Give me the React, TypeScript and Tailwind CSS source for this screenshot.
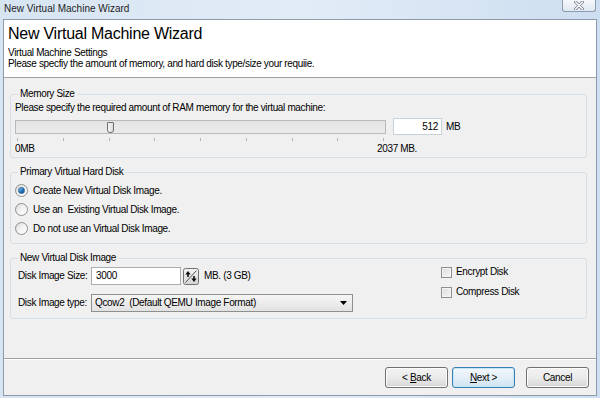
const ticks = [0, 1, 2, 3, 4, 5, 6, 7, 8]

function Radio({checked, label}: {checked?: boolean; label: string}) {
  return (
    <label className="flex h-[19px] items-center">
      <span className="flex h-[13px] w-[13px] items-center justify-center rounded-full border border-[#8e8f8f] bg-gradient-to-br from-[#d8d8d8] via-[#f4f4f4] to-[#ffffff]">
        {checked && (
          <span className="h-[7px] w-[7px] rounded-full bg-gradient-to-br from-[#9fd3f6] via-[#2a7ec4] to-[#0f4f91] border border-[#1f5b96]" />
        )}
      </span>
      <span className="ml-[5px] whitespace-pre">{label}</span>
    </label>
  )
}

function Checkbox({label}: {label: string}) {
  return (
    <label className="flex h-[12px] items-center">
      <span className="h-[11px] w-[11px] border border-[#8e8f8f] bg-gradient-to-br from-[#dcdcdc] to-[#f6f6f6] shadow-[inset_0_0_0_1px_#f4f4f4]" />
      <span className="ml-[4px] whitespace-nowrap">{label}</span>
    </label>
  )
}

function WinButton({children, focused}: {children: React.ReactNode; focused?: boolean}) {
  return (
    <button
      className={
        focused
          ? "h-[21px] w-[63px] rounded-[3px] border border-[#3c7fb1] bg-gradient-to-b from-[#f2f7fb] via-[#e5eff8] to-[#cfe3f3] shadow-[inset_0_0_0_1px_#c2e4f6] text-black"
          : "h-[21px] w-[63px] rounded-[3px] border border-[#707070] bg-gradient-to-b from-[#f2f2f2] via-[#ebebeb] to-[#d6d6d6] shadow-[inset_0_0_0_1px_#fcfcfc] text-black"
      }
    >
      {children}
    </button>
  )
}

export default function App() {
  return (
    <div className="flex h-[398px] w-[600px] flex-col bg-gradient-to-r from-[#d7e4f2] via-[#e2ecf7] to-[#cddef0] font-['Liberation_Sans',Arial,sans-serif] text-[10px] leading-[12px] tracking-[-0.35px] text-black">
      {/* title bar */}
      <div className="flex h-[19px] shrink-0 items-start justify-between">
        <span className="ml-[4px] mt-[3px] text-[10px] tracking-normal text-[#1e1e1e]">New Virtual Machine Wizard</span>
        <div className="mr-[4px] flex h-[12px] w-[34px] items-center justify-center rounded-b-[3px] border border-t-0 border-[#8c9cb0] bg-gradient-to-b from-[#f5f8fb] to-[#dfe8f1]">
          <svg width="10" height="9" viewBox="0 0 10 9">
            <path d="M1.5 1 L8.5 8 M8.5 1 L1.5 8" stroke="#7d8794" strokeWidth="3" strokeLinecap="round" />
            <path d="M1.5 1 L8.5 8 M8.5 1 L1.5 8" stroke="#ffffff" strokeWidth="1.3" strokeLinecap="round" />
          </svg>
        </div>
      </div>

      {/* window client */}
      <div className="mx-[3px] mb-[2px] flex flex-1 flex-col border border-[#8e9aab] bg-[#f0f0f0]">
        {/* header */}
        <div className="h-[58px] shrink-0 border-b border-[#a0a0a0] bg-white pl-[4px] pt-[4px]">
          <div className="text-[16px] leading-[20px] tracking-[-0.25px] text-black">New Virtual Machine Wizard</div>
          <div className="mt-[3px] leading-[11px]">Virtual Machine Settings</div>
          <div className="leading-[11px]">Please specfiy the amount of memory, and hard disk type/size your requiie.</div>
        </div>

        {/* content */}
        <div className="flex flex-1 flex-col gap-[8px] pl-[6px] pr-[9px] pt-[10px]">
          {/* Memory */}
          <fieldset className="h-[70px] rounded-[3px] border border-[#d5dfe5] pl-[4px]">
            <legend className="ml-[3px] px-[2px] leading-[12px]">Memory Size</legend>
            <div className="mt-[2px]">Please specify the required amount of RAM memory for the virtual machine:</div>
            <div className="mt-[4px] flex h-[17px] items-center">
              <div className="relative h-[14px] w-[371px] border border-[#b9b9b9] bg-gradient-to-b from-[#e3e3e3] to-[#ebebeb]">
                <div className="absolute left-[91px] top-[1px] h-[11px] w-[7px] rounded-b-[3px] rounded-t-[1px] border border-[#6f6f6f] bg-gradient-to-r from-[#f6f6f6] to-[#dcdcdc]" />
              </div>
              <div className="ml-[7px] flex h-[17px] w-[49px] items-center justify-end border border-[#c9d1d8] bg-white pr-[3px]">512</div>
              <span className="ml-[4px]">MB</span>
            </div>
            <div className="mt-[3px] flex w-[371px] justify-between px-[2px]">
              {ticks.map(t => (
                <span key={t} className="h-[3px] w-px bg-[#b4b4b4]" />
              ))}
            </div>
            <div className="mt-[2px] flex">
              <span className="w-[362px]">0MB</span>
              <span>2037 MB.</span>
            </div>
          </fieldset>

          {/* Primary disk */}
          <fieldset className="h-[78px] rounded-[3px] border border-[#d5dfe5] pl-[4px]">
            <legend className="ml-[3px] px-[2px] leading-[12px]">Primary Virtual Hard Disk</legend>
            <div className="mt-[3px] flex flex-col">
              <Radio checked label="Create New Virtual Disk Image." />
              <Radio label="Use an  Existing Virtual Disk Image." />
              <Radio label="Do not use an Virtual Disk Image." />
            </div>
          </fieldset>

          {/* New disk image */}
          <fieldset className="h-[67px] rounded-[3px] border border-[#d5dfe5] pl-[7px]">
            <legend className="ml-[0px] px-[2px] leading-[12px]">New Virtual Disk Image</legend>
            <div className="flex">
              <div className="mt-[3px] flex w-[340px] flex-col gap-[9px]">
                <div className="flex h-[18px] items-center">
                  <span className="w-[73px] whitespace-nowrap">Disk Image Size:</span>
                  <div className="flex h-[18px] w-[90px] items-center border border-[#abadb3] bg-white pl-[4px]">3000</div>
                  <svg className="ml-[2px]" width="16" height="17" viewBox="0 0 16 17">
                    <defs>
                      <linearGradient id="sp" x1="0" y1="0" x2="0" y2="1">
                        <stop offset="0" stopColor="#f4f4f4" />
                        <stop offset="1" stopColor="#d4d4d4" />
                      </linearGradient>
                    </defs>
                    <rect x="0.5" y="0.5" width="15" height="16" rx="2" fill="url(#sp)" stroke="#707070" />
                    <path d="M2.5 14.5 L13.5 2.5" stroke="#555" strokeWidth="1" />
                    <path d="M5 3 L2.3 6.5 H4.2 V9 H5.8 V6.5 H7.7 Z" fill="#111" />
                    <path d="M11 14 L8.3 10.5 H10.2 V8 H11.8 V10.5 H13.7 Z" fill="#111" />
                  </svg>
                  <span className="ml-[5px] whitespace-nowrap">MB. (3 GB)</span>
                </div>
                <div className="flex h-[18px] items-center">
                  <span className="w-[73px] whitespace-nowrap">Disk Image type:</span>
                  <div className="flex h-[18px] w-[262px] items-center justify-between border border-[#8e8f8f] bg-gradient-to-b from-[#f6f6f6] to-[#e2e2e2] pl-[3px] pr-[5px]">
                    <span className="whitespace-pre">Qcow2  (Default QEMU Image Format)</span>
                    <svg width="7" height="4" viewBox="0 0 7 4">
                      <path d="M0 0 H7 L3.5 4 Z" fill="#000" />
                    </svg>
                  </div>
                </div>
              </div>
              <div className="ml-[83px] mt-[2px] flex flex-col gap-[8px]">
                <Checkbox label="Encrypt Disk" />
                <Checkbox label="Compress Disk" />
              </div>
            </div>
          </fieldset>
        </div>

        {/* footer */}
        <div className="h-[37px] shrink-0 border-t border-t-[#a0a0a0] shadow-[inset_0_1px_0_#ffffff]">
          <div className="flex justify-end gap-[4px] pr-[7px] pt-[8px]">
            <WinButton>
              &lt; <span className="underline">B</span>ack
            </WinButton>
            <WinButton focused>
              <span className="underline">N</span>ext &gt;
            </WinButton>
            <div className="ml-[7px]">
              <WinButton>Cancel</WinButton>
            </div>
          </div>
        </div>
      </div>
    </div>
  )
}
